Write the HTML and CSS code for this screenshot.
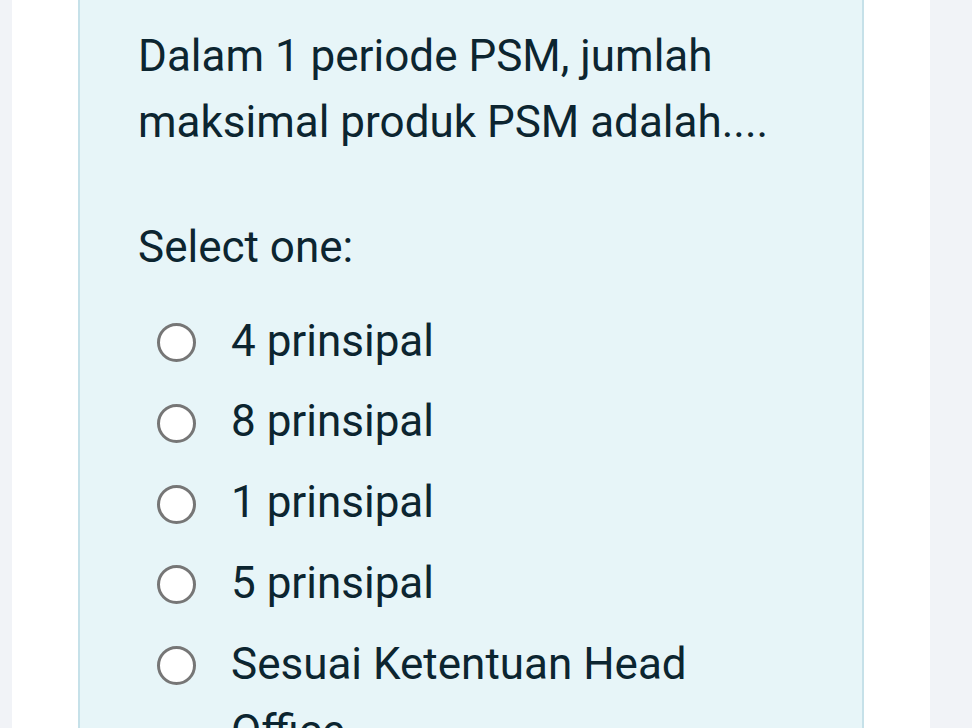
FILE: index.html
```html
<!DOCTYPE html>
<html lang="id">
<head>
<meta charset="utf-8">
<title>Quiz</title>
<link rel="stylesheet" href="styles.css">
</head>
<body>
<div class="page">
  <div class="main">
    <div class="card">
      <div class="qtext">Dalam 1 periode PSM, jumlah maksimal produk PSM adalah....</div>
      <div class="prompt">Select one:</div>
      <div class="answer">
        <label class="option"><span class="radio"></span><span class="label">4 prinsipal</span></label>
        <label class="option"><span class="radio"></span><span class="label">8 prinsipal</span></label>
        <label class="option"><span class="radio"></span><span class="label">1 prinsipal</span></label>
        <label class="option"><span class="radio"></span><span class="label">5 prinsipal</span></label>
        <label class="option"><span class="radio"></span><span class="label">Sesuai Ketentuan Head Office</span></label>
      </div>
    </div>
  </div>
</div>
</body>
</html>
```

FILE: styles.css
```css
html, body {
  margin: 0;
  padding: 0;
  height: 100%;
  overflow: hidden;
}
body {
  background: #f1f3f7;
  font-family: Roboto, "Liberation Sans", sans-serif;
  color: #0c2530;
}
.page {
  padding-left: 12px;
  width: 918px;
  height: 100%;
}
.main {
  background: #ffffff;
  height: 100%;
  padding-left: 66px;
}
.card {
  width: 786px;
  min-height: 100%;
  background: #e7f5f8;
  border-left: 2px solid #c6e1e9;
  border-right: 2px solid #c6e1e9;
  padding: 23px 0 0 58px;
  box-sizing: border-box;
}
.qtext {
  font-size: 44px;
  line-height: 66px;
  width: 660px;
}
.prompt {
  font-size: 44px;
  line-height: 66px;
  margin-top: 59px;
}
.answer {
  margin-top: 27.5px;
  margin-left: 19px;
  display: flex;
  flex-direction: column;
  gap: 13.75px;
}
.option {
  display: flex;
  align-items: flex-start;
  font-size: 44px;
  line-height: 67px;
}
.radio {
  flex: none;
  width: 39px;
  height: 39px;
  box-sizing: border-box;
  border: 3px solid #767676;
  border-radius: 50%;
  background: #ffffff;
  margin-top: 15.5px;
  margin-right: 35px;
}
.label {
  width: 520px;
}
```
